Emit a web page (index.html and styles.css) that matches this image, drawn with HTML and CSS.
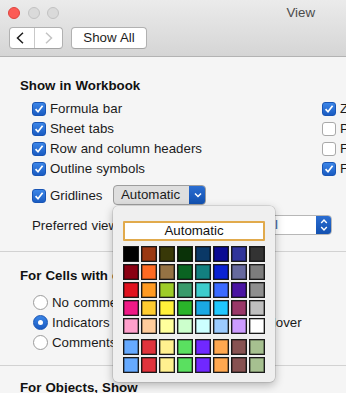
FILE: index.html
```html
<!DOCTYPE html>
<html>
<head>
<meta charset="utf-8">
<title>View</title>
<link rel="stylesheet" href="styles.css">
</head>
<body>
<div class="window">
  <header class="titlebar">
    <div class="titlerow">
      <span class="light red"></span>
      <span class="light"></span>
      <span class="light"></span>
      <span class="title">View</span>
    </div>
    <div class="toolbar">
      <div class="seg">
        <span class="seg-btn back">
          <svg width="8" height="12" viewBox="0 0 8 12"><polyline points="7,0.8 1.5,6 7,11.2" fill="none" stroke="#1e1e1e" stroke-width="1.5"/></svg>
        </span>
        <span class="seg-btn fwd">
          <svg width="8" height="12" viewBox="0 0 8 12"><polyline points="1,0.8 6.5,6 1,11.2" fill="none" stroke="#c4c4c4" stroke-width="1.5"/></svg>
        </span>
      </div>
      <span class="btn">Show All</span>
    </div>
  </header>

  <main class="content">
    <section class="sec">
      <h2 class="sec-title first">Show in Workbook</h2>
      <div class="opts">
        <div class="col">
          <div class="row"><span class="cb on"><svg width="10" height="10" viewBox="0 0 10 10"><polyline points="1.6,5.2 4,7.8 8.6,1.8" fill="none" stroke="#fff" stroke-width="1.7"/></svg></span><span class="lbl">Formula bar</span></div>
          <div class="row"><span class="cb on"><svg width="10" height="10" viewBox="0 0 10 10"><polyline points="1.6,5.2 4,7.8 8.6,1.8" fill="none" stroke="#fff" stroke-width="1.7"/></svg></span><span class="lbl">Sheet tabs</span></div>
          <div class="row"><span class="cb on"><svg width="10" height="10" viewBox="0 0 10 10"><polyline points="1.6,5.2 4,7.8 8.6,1.8" fill="none" stroke="#fff" stroke-width="1.7"/></svg></span><span class="lbl">Row and column headers</span></div>
          <div class="row"><span class="cb on"><svg width="10" height="10" viewBox="0 0 10 10"><polyline points="1.6,5.2 4,7.8 8.6,1.8" fill="none" stroke="#fff" stroke-width="1.7"/></svg></span><span class="lbl">Outline symbols</span></div>
        </div>
        <div class="col">
          <div class="row"><span class="cb on"><svg width="10" height="10" viewBox="0 0 10 10"><polyline points="1.6,5.2 4,7.8 8.6,1.8" fill="none" stroke="#fff" stroke-width="1.7"/></svg></span><span class="lbl">Zero values</span></div>
          <div class="row"><span class="cb off"></span><span class="lbl">Page breaks</span></div>
          <div class="row"><span class="cb off"></span><span class="lbl">Formulas</span></div>
          <div class="row"><span class="cb on"><svg width="10" height="10" viewBox="0 0 10 10"><polyline points="1.6,5.2 4,7.8 8.6,1.8" fill="none" stroke="#fff" stroke-width="1.7"/></svg></span><span class="lbl">Function ScreenTips</span></div>
        </div>
      </div>
      <div class="grid-row">
        <span class="cb on"><svg width="10" height="10" viewBox="0 0 10 10"><polyline points="1.6,5.2 4,7.8 8.6,1.8" fill="none" stroke="#fff" stroke-width="1.7"/></svg></span>
        <span class="lbl gl-lbl">Gridlines</span>
        <span class="popbtn">
          <span class="popbtn-label">Automatic</span>
          <span class="popbtn-arrow"><svg width="8" height="6" viewBox="0 0 8 6"><polyline points="1,1.5 4,4.5 7,1.5" fill="none" stroke="#fff" stroke-width="1.5"/></svg></span>
        </span>
      </div>
      <div class="pref-row">
        <span class="pref-lbl">Preferred view for new sheets:</span>
        <span class="select">
          <span class="select-label">Normal</span>
          <span class="select-arrow"><svg width="8" height="14" viewBox="0 0 8 14"><polyline points="1.2,5 4,2 6.8,5" fill="none" stroke="#fff" stroke-width="1.4"/><polyline points="1.2,9 4,12 6.8,9" fill="none" stroke="#fff" stroke-width="1.4"/></svg></span>
        </span>
      </div>
    </section>

    <hr class="sep sep1">

    <section class="sec">
      <h2 class="sec-title second">For Cells with comments, show:</h2>
      <div class="radios">
        <div class="rrow"><span class="radio"></span><span class="lbl">No comments or indicators</span></div>
        <div class="rrow"><span class="radio on"></span><span class="lbl">Indicators only, and comments on rollover</span></div>
        <div class="rrow"><span class="radio"></span><span class="lbl">Comments and indicators</span></div>
      </div>
    </section>

    <hr class="sep sep2">

    <section class="sec">
      <h2 class="sec-title third">For Objects, Show</h2>
    </section>
  </main>

  <div class="popup">
    <div class="auto">Automatic</div>
    <div class="swatches">
      <span class="sw" style="background:#000000"></span>
      <span class="sw" style="background:#9a3812"></span>
      <span class="sw" style="background:#383808"></span>
      <span class="sw" style="background:#0a3208"></span>
      <span class="sw" style="background:#0a3866"></span>
      <span class="sw" style="background:#0a0a92"></span>
      <span class="sw" style="background:#30349a"></span>
      <span class="sw" style="background:#333333"></span>

      <span class="sw" style="background:#8a0012"></span>
      <span class="sw" style="background:#ff6a22"></span>
      <span class="sw" style="background:#957244"></span>
      <span class="sw" style="background:#0a6422"></span>
      <span class="sw" style="background:#128080"></span>
      <span class="sw" style="background:#0a22d2"></span>
      <span class="sw" style="background:#66699e"></span>
      <span class="sw" style="background:#7d7d7d"></span>

      <span class="sw" style="background:#e0121e"></span>
      <span class="sw" style="background:#ff9a22"></span>
      <span class="sw" style="background:#9ecc28"></span>
      <span class="sw" style="background:#3a9a6a"></span>
      <span class="sw" style="background:#3ecccc"></span>
      <span class="sw" style="background:#3a6aff"></span>
      <span class="sw" style="background:#4a14a2"></span>
      <span class="sw" style="background:#8f8f8f"></span>

      <span class="sw" style="background:#ef1a86"></span>
      <span class="sw" style="background:#ffcc30"></span>
      <span class="sw" style="background:#fff03a"></span>
      <span class="sw" style="background:#2ab42a"></span>
      <span class="sw" style="background:#1aa8e4"></span>
      <span class="sw" style="background:#20c8ff"></span>
      <span class="sw" style="background:#993868"></span>
      <span class="sw" style="background:#bfbfbf"></span>

      <span class="sw" style="background:#ffa0cc"></span>
      <span class="sw" style="background:#ffcc9c"></span>
      <span class="sw" style="background:#ffff9c"></span>
      <span class="sw" style="background:#ccffcc"></span>
      <span class="sw" style="background:#ccffff"></span>
      <span class="sw" style="background:#9ccbff"></span>
      <span class="sw" style="background:#cc9cff"></span>
      <span class="sw" style="background:#ffffff"></span>
    </div>
    <div class="swatches recent">
      <span class="sw" style="background:#66aaff"></span>
      <span class="sw" style="background:#e0333c"></span>
      <span class="sw" style="background:#fff08f"></span>
      <span class="sw" style="background:#5ae060"></span>
      <span class="sw" style="background:#7028ff"></span>
      <span class="sw" style="background:#ffa850"></span>
      <span class="sw" style="background:#875252"></span>
      <span class="sw" style="background:#a6c090"></span>

      <span class="sw" style="background:#66aaff"></span>
      <span class="sw" style="background:#e0333c"></span>
      <span class="sw" style="background:#fff08f"></span>
      <span class="sw" style="background:#5ae060"></span>
      <span class="sw" style="background:#7028ff"></span>
      <span class="sw" style="background:#ffa850"></span>
      <span class="sw" style="background:#875252"></span>
      <span class="sw" style="background:#a6c090"></span>
    </div>
  </div>
</div>
</body>
</html>
```

FILE: styles.css
```css
html, body {
  margin: 0;
  padding: 0;
}

body {
  width: 346px;
  height: 393px;
  overflow: hidden;
  background: #f5f5f5;
  font-family: "Liberation Sans", Arial, sans-serif;
  font-size: 13.3px;
  color: #1b1b1b;
  word-spacing: 0.4px;
}

.window {
  position: relative;
  width: 346px;
  height: 393px;
  overflow: hidden;
}

/* ---------- title bar ---------- */
.titlebar {
  height: 56px;
  border-bottom: 1px solid #b3b3b3;
  background: linear-gradient(#ebebeb, #d5d5d5);
  display: flex;
  flex-direction: column;
}

.titlerow {
  display: flex;
  align-items: flex-start;
  height: 19px;
  padding-left: 8px;
}

.light {
  width: 12px;
  height: 12px;
  box-sizing: border-box;
  border-radius: 50%;
  margin-top: 7px;
  margin-right: 7.5px;
  background: #dadada;
  border: 1px solid #c2c2c2;
}

.light.red {
  background: #fc5b55;
  border-color: #de443e;
}

.title {
  margin-left: auto;
  margin-right: 31px;
  margin-top: 5px;
  line-height: 16px;
  color: #4b4b4b;
}

.toolbar {
  display: flex;
  margin-top: 8px;
  padding-left: 9px;
  gap: 8px;
}

.seg {
  display: flex;
  height: 22px;
  width: 54px;
  box-sizing: border-box;
  border: 1px solid #b1b1b1;
  border-bottom-color: #a4a4a4;
  border-radius: 4px;
  background: #fff;
  overflow: hidden;
}

.seg-btn {
  display: flex;
  align-items: center;
}

.seg-btn.back {
  width: 25px;
  padding-left: 6px;
  box-sizing: border-box;
  border-right: 1px solid #c9c9c9;
}

.seg-btn.fwd {
  flex: 1;
  justify-content: center;
}

.btn {
  display: block;
  height: 22px;
  width: 76px;
  box-sizing: border-box;
  border: 1px solid #b1b1b1;
  border-bottom-color: #a4a4a4;
  border-radius: 4px;
  background: #fff;
  color: #1d1d1d;
  text-align: center;
  line-height: 20px;
}

/* ---------- content ---------- */
.content {
  padding: 19px 14px 0 20px;
}

.sec-title {
  margin: 0;
  font-size: 13.3px;
  font-weight: bold;
  line-height: 20px;
  color: #111;
  white-space: nowrap;
}

.sec-title.first { margin-bottom: 2px; }
.sec-title.second { margin-top: 14px; margin-bottom: 6px; }
.sec-title.third { margin-top: 12px; }

.opts {
  display: grid;
  grid-template-columns: 290px 1fr;
  padding-left: 12px;
}

.col {
  display: flex;
  flex-direction: column;
}

.row {
  display: flex;
  align-items: center;
  height: 20px;
  gap: 4px;
  white-space: nowrap;
}

.lbl {
  white-space: nowrap;
}

.cb {
  flex: none;
  width: 14px;
  height: 14px;
  box-sizing: border-box;
  border-radius: 3px;
  display: flex;
  align-items: center;
  justify-content: center;
  margin-top: 1px;
}

.cb.on {
  background: linear-gradient(#3c86e8, #1a5cc2);
  border: 1px solid #1955b5;
}

.cb.off {
  background: #fff;
  border: 1px solid #a9a9a9;
}

.grid-row {
  display: flex;
  align-items: center;
  height: 22px;
  margin-top: 6px;
  padding-left: 12px;
  gap: 4px;
}

.gl-lbl {
  width: 59px;
}

.popbtn {
  display: flex;
  height: 20px;
  width: 93px;
  box-sizing: border-box;
  border: 1px solid #9d9d9d;
  border-radius: 4px;
  background: #dedede;
  overflow: hidden;
}

.popbtn-label {
  flex: 1;
  padding-left: 7px;
  line-height: 18px;
  color: #1b1b1b;
}

.popbtn-arrow {
  width: 17px;
  margin: -1px -1px -1px 0;
  background: linear-gradient(#2c6fd3, #114fae);
  display: flex;
  align-items: center;
  justify-content: center;
}

.pref-row {
  display: flex;
  align-items: center;
  height: 22px;
  margin-top: 8px;
  padding-left: 12px;
}

.pref-lbl {
  white-space: nowrap;
}

.select {
  margin-left: auto;
  flex: none;
  width: 104px;
  height: 20px;
  box-sizing: border-box;
  display: flex;
  border: 1px solid #b7b7b7;
  border-radius: 4px;
  background: #fff;
  overflow: hidden;
}

.select-label {
  flex: 1;
  padding-left: 6px;
  line-height: 18px;
  color: #2a5da8;
}

.select-arrow {
  width: 16px;
  margin: -1px -1px -1px 0;
  background: linear-gradient(#2c6fd3, #114fae);
  display: flex;
  align-items: center;
  justify-content: center;
}

.sep {
  margin: 0 -14px 0 -20px;
  border: 0;
  height: 1px;
  background: #d2d2d2;
}

.sep1 { margin-top: 15px; }
.sep2 { margin-top: 13px; }

.radios {
  padding-left: 13px;
}

.rrow {
  display: flex;
  align-items: center;
  height: 20px;
  gap: 4px;
  white-space: nowrap;
}

.rrow .lbl {
  word-spacing: 0.9px;
}

.radio {
  flex: none;
  width: 15px;
  height: 15px;
  box-sizing: border-box;
  border-radius: 50%;
  border: 1px solid #9c9c9c;
  background: #fff;
  display: flex;
  align-items: center;
  justify-content: center;
}

.radio.on {
  background: linear-gradient(#3a84e6, #1a5cc2);
  border-color: #1753b2;
}

.radio.on::after {
  content: "";
  width: 5px;
  height: 5px;
  border-radius: 50%;
  background: #fff;
}

/* ---------- colour popup ---------- */
.popup {
  position: absolute;
  left: 113px;
  top: 206px;
  width: 162px;
  height: 176px;
  box-sizing: border-box;
  padding: 15px 10px 9px;
  background: #efefef;
  border-radius: 5px;
  box-shadow: 0 0 0 0.5px rgba(0, 0, 0, 0.18), 0 3px 10px rgba(0, 0, 0, 0.28);
}

.auto {
  height: 20px;
  box-sizing: border-box;
  border: 2px solid #e1aa4c;
  border-radius: 1px;
  background: #fff;
  text-align: center;
  line-height: 16px;
  color: #111;
}

.swatches {
  display: grid;
  grid-template-columns: repeat(8, 16px);
  grid-auto-rows: 16px;
  gap: 2px;
  margin-top: 5px;
}

.sw {
  display: block;
  box-sizing: border-box;
  border: 1px solid #1a1a1a;
  box-shadow: inset 0 0 0 0.6px rgba(0, 0, 0, 0.55);
}
```
